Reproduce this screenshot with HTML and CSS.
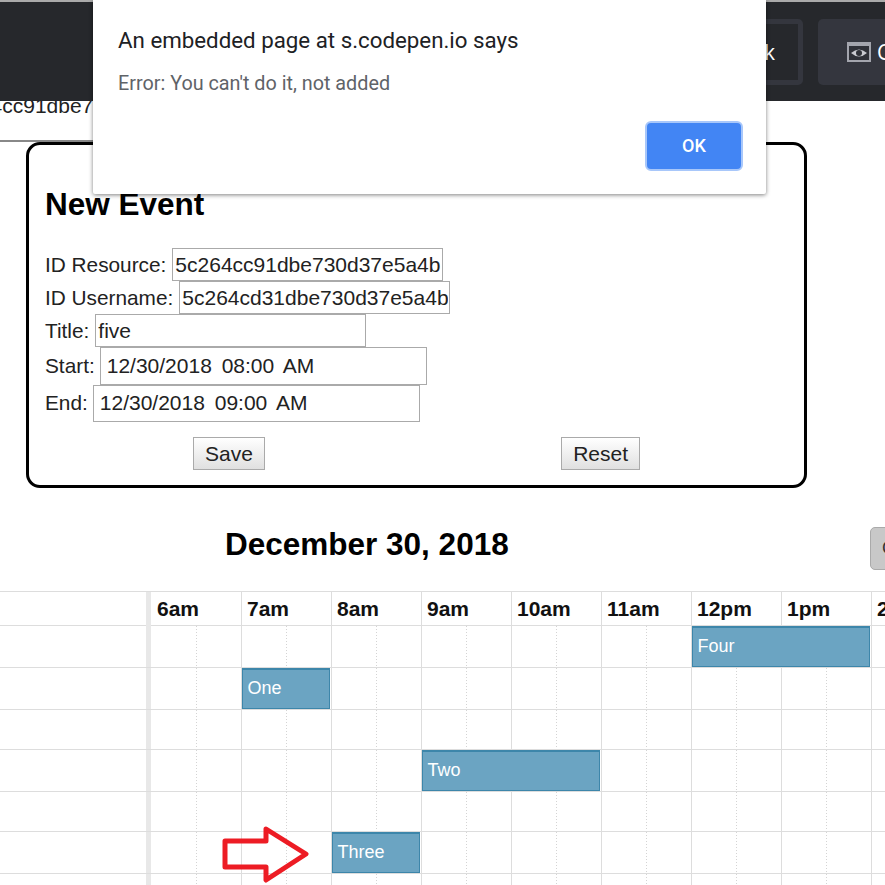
FILE: index.html
```html
<!DOCTYPE html>
<html>
    <head>
        <title>New Event</title>
        <link rel="stylesheet" href="styles.css">
    </head>
    <body>
        <div class="top-bar">
            <div class="top-btn outline"><span>k</span></div>
            <div class="top-btn filled">
                <svg class="eye" viewBox="0 0 24 20" width="24" height="20">
                    <rect x="0" y="0" width="24" height="20" fill="#a3a5ad"/>
                    <rect x="2" y="4" width="20" height="14" fill="#2f3138"/>
                    <path d="M4 11 Q12 4 20 11 Q12 18 4 11Z" fill="#c9cad0"/>
                    <circle cx="12" cy="11" r="3" fill="#2f3138"/>
                </svg>
                <span>C</span>
            </div>
        </div>
        <div class="tab-strip">
            <div class="tab-text">5c264cc91dbe730d37e5a4b</div>
        </div>

        <form class="card">
            <h2>New Event</h2>
            <div class="field">ID Resource: <input class="id-input" type="text" value="5c264cc91dbe730d37e5a4b"></div>
            <div class="field">ID Username: <input class="id-input" type="text" value="5c264cd31dbe730d37e5a4b"></div>
            <div class="field">Title: <input class="id-input" type="text" value="five"></div>
            <div class="field">Start: <input class="date-input" type="text" value="12/30/2018 08:00 AM"></div>
            <div class="field">End: <input class="date-input" type="text" value="12/30/2018 09:00 AM"></div>
            <div class="buttons">
                <input class="button" type="button" value="Save">
                <input class="button" type="button" value="Reset">
            </div>
        </form>

        <div class="cal-head">
            <h2>December 30, 2018</h2>
            <div class="cal-btn">Calendar</div>
        </div>

        <div class="timeline">
            <div class="row head">
                <div class="side"></div>
                <div class="hour">6am</div>
                <div class="hour">7am</div>
                <div class="hour">8am</div>
                <div class="hour">9am</div>
                <div class="hour">10am</div>
                <div class="hour">11am</div>
                <div class="hour">12pm</div>
                <div class="hour">1pm</div>
                <div class="hour">2pm</div>
            </div>
            <div class="row slots tall">
                <div class="side"></div>
                <div class="event col-12 span-2">Four</div>
            </div>
            <div class="row slots tall">
                <div class="side"></div>
                <div class="event col-7 span-1">One</div>
            </div>
            <div class="row slots short">
                <div class="side"></div>
            </div>
            <div class="row slots tall">
                <div class="side"></div>
                <div class="event col-9 span-2">Two</div>
            </div>
            <div class="row slots short">
                <div class="side"></div>
            </div>
            <div class="row slots tall">
                <div class="side"></div>
                <div class="event col-8 span-1">Three</div>
            </div>
            <div class="row slots tall">
                <div class="side"></div>
            </div>
        </div>

        <svg class="arrow" viewBox="0 0 90 60" width="90" height="60">
            <path d="M3 16 H44 V4 L84 29 L44 55 V42 H3 Z" fill="none" stroke="#ed1c24" stroke-width="5" stroke-linejoin="round"/>
        </svg>

        <div class="dialog">
            <div class="dialog-title">An embedded page at s.codepen.io says</div>
            <div class="dialog-text">Error: You can't do it, not added</div>
            <div class="ok">OK</div>
        </div>
    </body>
</html>
```

FILE: styles.css
```css
html, body {
    height: 885px;
    overflow: hidden;
}
body {
    position: relative;
    margin: 0;
    background-color: #fff;
    color: #000;
    font-family: "Liberation Sans", Arial, sans-serif;
    font-size: 20.8px;
}

/* top bar of the pen */
.top-bar {
    display: flex;
    justify-content: flex-end;
    gap: 15px;
    height: 101px;
    padding: 17px 0 16px 0;
    box-sizing: border-box;
    border-top: 2px solid #aaa;
    background-color: #26282c;
}
.top-btn {
    display: flex;
    align-items: center;
    height: 66px;
    box-sizing: border-box;
    border-radius: 5px;
    color: #fff;
    font-family: "Open Sans", sans-serif;
    font-size: 21px;
}
.outline {
    justify-content: flex-end;
    width: 110px;
    padding-right: 23px;
    border: 5px solid #34363e;
}
.filled {
    gap: 6px;
    width: 67px;
    padding-left: 29px;
    border-radius: 5px 0 0 5px;
    background-color: #34363e;
    overflow: hidden;
}
.eye {
    flex: none;
}
.tab-strip {
    width: 93px;
    height: 39px;
    border-bottom: 2px solid #888;
    overflow: hidden;
}
.tab-text {
    margin: -2px 0 0 -55px;
    font-size: 21px;
    line-height: 14px;
    white-space: nowrap;
    color: #222;
}

/* form */
.card {
    width: 781px;
    height: 346px;
    margin-left: 26px;
    padding: 41px 0 0 16px;
    box-sizing: border-box;
    border: 3px solid #000;
    border-radius: 14px;
}
.card h2 {
    margin: 0 0 26px 0;
    font-size: 31.5px;
    line-height: 36px;
}
.field {
    display: flex;
    align-items: center;
    gap: 6px;
    color: #222;
}
.field input {
    box-sizing: border-box;
    margin: 0;
    border: 1px solid #aaa;
    font-family: "Liberation Sans", Arial, sans-serif;
    font-size: 21px;
    color: #222;
    background-color: #fff;
}
.id-input {
    width: 271px;
    height: 33px;
    padding: 0 1px 0 2px;
}
.field .date-input {
    width: 327px;
    height: 37.5px;
    margin-left: -1px;
    padding: 0 6px;
    word-spacing: 4px;
}
.buttons {
    display: flex;
    justify-content: space-between;
    width: 447px;
    margin: 15px 0 0 148px;
}
.button {
    height: 33px;
    padding: 0 11px;
    border: 1px solid #aaa;
    background: linear-gradient(#fff, #e0e0e0);
    font-family: "Liberation Sans", Arial, sans-serif;
    font-size: 21px;
    color: #222;
}

/* calendar */
.cal-head {
    display: flex;
    height: 103px;
    padding-left: 225px;
    box-sizing: border-box;
}
.cal-head h2 {
    flex: none;
    width: 645px;
    margin: 38px 0 0 0;
    font-size: 31.5px;
    line-height: 36px;
}
.cal-btn {
    flex: none;
    width: 60px;
    height: 43px;
    margin-top: 39px;
    padding-left: 11px;
    box-sizing: border-box;
    border: 1px solid #aaa;
    border-radius: 5px;
    background-color: #c8c8c8;
    font-size: 18px;
    line-height: 41px;
    color: #333;
    overflow: hidden;
}
.timeline {
    width: 961px;
}
.row {
    display: grid;
    grid-template-columns: 146px 5px repeat(9, 90px);
    box-sizing: border-box;
    border-bottom: 1px solid #ddd;
    background-image: repeating-linear-gradient(to right, #ddd 0, #ddd 1px, transparent 1px, transparent 90px);
    background-position: 241px 0;
    background-repeat: no-repeat;
}
.slots {
    background-image:
        repeating-linear-gradient(to right, #ddd 0, #ddd 1px, transparent 1px, transparent 90px),
        repeating-linear-gradient(to bottom, transparent 0, transparent 1px, #fff 1px, #fff 3px),
        repeating-linear-gradient(to right, #d4d4d4 0, #d4d4d4 1px, transparent 1px, transparent 90px);
    background-position: 241px 0, 0 0, 196px 0;
}
.head {
    height: 35px;
    border-top: 1px solid #ddd;
}
.tall {
    height: 42px;
}
.short {
    height: 40px;
}
.side {
    grid-column: 1 / 3;
    grid-row: 1;
    border-right: 5px solid #e8e8e8;
}
.hour {
    padding-left: 6px;
    font-size: 21px;
    font-weight: bold;
    line-height: 34px;
    color: #111;
}
.event {
    grid-row: 1;
    box-sizing: border-box;
    margin: 0 1px;
    padding-left: 4.5px;
    border: 1px solid #3d86aa;
    border-top-width: 2px;
    background-color: #6ba4c2;
    color: #fff;
    font-size: 18px;
    line-height: 36px;
}
.col-7 { grid-column-start: 4; }
.col-8 { grid-column-start: 5; }
.col-9 { grid-column-start: 6; }
.col-12 { grid-column-start: 9; }
.span-1 { grid-column-end: span 1; }
.span-2 { grid-column-end: span 2; }

/* things on top of the page */
.arrow {
    position: absolute;
    left: 222px;
    top: 825px;
}
.dialog {
    position: absolute;
    left: 93px;
    top: 0;
    width: 673px;
    height: 194px;
    padding: 26px 0 0 25px;
    box-sizing: border-box;
    background-color: #fff;
    border-radius: 0 0 2px 2px;
    box-shadow: 0 1px 4px rgba(0, 0, 0, 0.5);
    font-family: "Roboto", sans-serif;
}
.dialog-title {
    font-size: 22.3px;
    line-height: 28px;
    color: #202124;
}
.dialog-text {
    margin-top: 17px;
    font-size: 19.8px;
    line-height: 26px;
    color: #5f6368;
}
.ok {
    position: absolute;
    right: 23px;
    bottom: 23px;
    width: 98px;
    height: 50px;
    box-sizing: border-box;
    border: 2px solid #a8c7fa;
    border-radius: 6px;
    background-color: #4285f4;
    color: #fff;
    font-size: 18px;
    font-weight: 500;
    line-height: 46px;
    text-align: center;
}
```
